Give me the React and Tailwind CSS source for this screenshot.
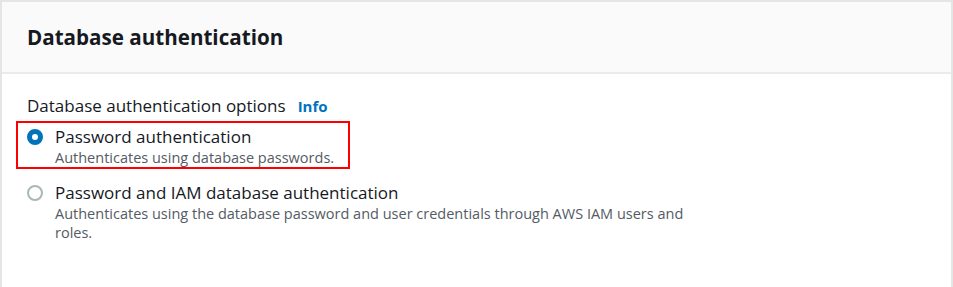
export default function App() {
  return (
    <div className="w-[953px] h-[287px] bg-white font-['Open_Sans',sans-serif] text-[#16191f]">
      <div className="w-[953px] h-[287px] border-l-2 border-t-2 border-r-2 border-[#e4e6e6] flex flex-col">
        <div className="h-[72px] bg-[#fafafa] border-b-2 border-[#e9ebed] flex items-center px-[25px]">
          <h2 className="text-[20.6px] font-bold leading-[24px]">Database authentication</h2>
        </div>
        <div className="px-[25px] pt-[20px]">
          <div className="flex items-center gap-[12px] h-[24px]">
            <span className="text-[17px]">Database authentication options</span>
            <span className="text-[15px] font-bold text-[#0073bb]">Info</span>
          </div>
          <div className="mt-[3px] -ml-[11px] w-[334px] border-2 border-[#ff0000] pl-[9px] pt-[2px]">
            <label className="flex gap-[12px]">
              <span className="mt-[4px] w-[16px] h-[16px] rounded-full border-[5px] border-[#0073bb] bg-white shrink-0" />
              <span className="flex flex-col">
                <span className="text-[17px] leading-[23px]">Password authentication</span>
                <span className="text-[14.5px] leading-[19px] text-[#545b64]">Authenticates using database passwords.</span>
              </span>
            </label>
          </div>
          <label className="mt-[12px] flex gap-[12px]">
            <span className="mt-[4px] w-[16px] h-[16px] rounded-full border-2 border-[#aab7b8] bg-white shrink-0" />
            <span className="flex flex-col max-w-[630px]">
              <span className="text-[17px] leading-[23px]">Password and IAM database authentication</span>
              <span className="text-[14.5px] leading-[19px] text-[#545b64]">
                Authenticates using the database password and user credentials through AWS IAM users and roles.
              </span>
            </span>
          </label>
        </div>
      </div>
    </div>
  )
}
